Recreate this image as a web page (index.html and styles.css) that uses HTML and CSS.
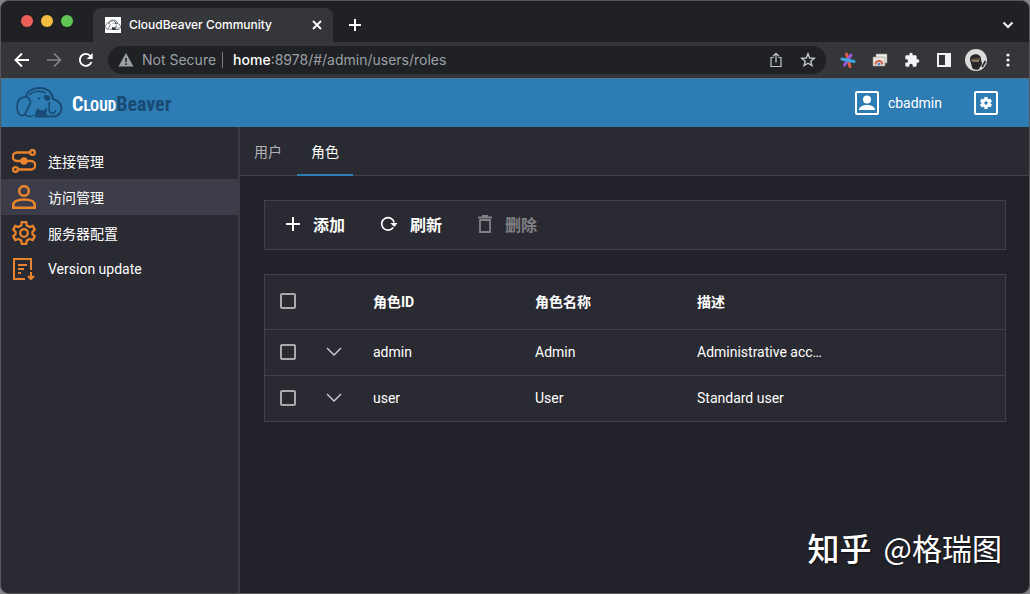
FILE: index.html
```html
<!DOCTYPE html>
<html lang="zh-CN">
<head>
<meta charset="utf-8">
<title>CloudBeaver Community</title>
<link rel="stylesheet" href="styles.css">
</head>
<body>
<svg class="defs" width="0" height="0" aria-hidden="true">
  <symbol id="beaver" viewBox="0 0 48 34">
    <path d="M11 11C12 5 18 2 25 2C32 2 37 6 38 13C43 14 47 18 46.500 23C46 28 42 31 37 30.500H20" fill="none" stroke="currentColor" stroke-width="2"/>
    <path d="M12 11C5 10 2 15 2 21C2 27 5 31 9 29C12 27 11 23 14 20C16 17 16 13 12 11Z" fill="none" stroke="currentColor" stroke-width="1.800"/>
    <path d="M14 9C18 5 25 4 31 7M34 16C35 22 32 25 36 27C38 28 40 27 41 24M10 29C13 31 16 31 19 29" fill="none" stroke="currentColor" stroke-width="1.500"/>
    <path d="M30 9C36 8 37 14 33 15C30 15 27 11 30 9ZM22 11.500L26 12L24 14ZM20 31C20 27 21 24 23 22C26 26 30 25 32 21C33 25 29 27 34 31Z" fill="currentColor"/>
  </symbol>
  <symbol id="chevron" viewBox="0 0 16 10"><path d="M1 1L8 8L15 1" fill="none" stroke="currentColor" stroke-width="1.300"/></symbol>
</svg>
<div class="window">
  <div class="tabstrip">
    <div class="lights"><i class="light red"></i><i class="light yellow"></i><i class="light green"></i></div>
    <div class="browser-tab">
      <svg class="favicon" width="16" height="16"><use href="#beaver"/></svg>
      <span class="tab-title">CloudBeaver Community</span>
      <button class="plain" aria-label="Close tab"><svg width="10" height="10" viewBox="0 0 10 10"><path d="M1 1L9 9M9 1L1 9" stroke="currentColor" stroke-width="1.800"/></svg></button>
    </div>
    <button class="plain new-tab" aria-label="New tab"><svg width="12" height="12" viewBox="0 0 12 12"><path d="M6 0V12M0 6H12" stroke="currentColor" stroke-width="2"/></svg></button>
    <button class="plain tab-search" aria-label="Search tabs"><svg width="12" height="8" viewBox="0 0 12 8"><path d="M1.500 1.500L6 6L10.500 1.500" fill="none" stroke="currentColor" stroke-width="2"/></svg></button>
  </div>
  <div class="browser-bar">
    <button class="plain nav" aria-label="Back"><svg width="16" height="16" viewBox="0 0 16 16"><path d="M15 8H2M8 1.500L1.500 8L8 14.500" fill="none" stroke="currentColor" stroke-width="1.900"/></svg></button>
    <button class="plain nav dim" aria-label="Forward"><svg width="16" height="16" viewBox="0 0 16 16"><path d="M1 8H14M8 1.500L14.500 8L8 14.500" fill="none" stroke="currentColor" stroke-width="1.700"/></svg></button>
    <button class="plain nav" aria-label="Reload"><svg width="16" height="16" viewBox="0 0 16 16"><path d="M13.500 10A6 6 0 1 1 12.500 4" fill="none" stroke="currentColor" stroke-width="1.900"/><path d="M14.700 1V7H8.700Z" fill="currentColor"/></svg></button>
    <div class="address">
      <svg width="16" height="14" viewBox="0 0 16 14"><path fill-rule="evenodd" d="M8 0L15.500 13.500H.5ZM7.200 5V9H8.800V5ZM7.200 10.300V12H8.800V10.300Z" fill="currentColor"/></svg>
      <span class="security">Not Secure</span>
      <span class="url"><b>home</b>:8978/#/admin/users/roles</span>
      <button class="plain" aria-label="Share"><svg width="14" height="16" viewBox="0 0 14 16"><path d="M4.500 5.500H2V14.500H12V5.500H9.500M7 10.500V1.500M4 4.200L7 1.300L10 4.200" fill="none" stroke="currentColor" stroke-width="1.200"/></svg></button>
      <button class="plain" aria-label="Bookmark"><svg width="16" height="16" viewBox="0 0 16 16"><path d="M8 1.800L9.700 6L14.200 6.300L10.800 9.200L11.900 13.600L8 11.200L4.100 13.600L5.200 9.200L1.800 6.300L6.300 6Z" fill="none" stroke="currentColor" stroke-width="1.400"/></svg></button>
    </div>
    <div class="extensions">
      <button class="plain ext" aria-label="Color extension"><svg width="16" height="16" viewBox="0 0 16 16" stroke-width="3" stroke-linecap="round"><path d="M6.500 2L10 14.500" stroke="#d95d45"/><path d="M11 3L4.500 13" stroke="#9b59dc"/><path d="M2 7L14 9.500" stroke="#39a9e4"/></svg></button>
      <button class="plain ext" aria-label="Picture extension"><svg width="16" height="16" viewBox="0 0 16 16"><path d="M4 2H15V11H4Z" fill="#eee" stroke="#9a9388" stroke-width=".6"/><path d="M1 5H13V14H1Z" fill="#e8e4dc" stroke="#9a9388" stroke-width=".6"/><path d="M3.500 12.500A3.500 3.500 0 0 1 10.500 12.500" fill="none" stroke="#d65b49" stroke-width="2"/><circle cx="7" cy="12" r="1.500" fill="#498fcf"/></svg></button>
      <button class="plain ext" aria-label="Extensions"><svg width="16" height="16" viewBox="0 0 24 24"><path d="M20.500 11H19V7c0-1.100-.9-2-2-2h-4V3.500a2.500 2.500 0 0 0-5 0V5H4c-1.100 0-2 .9-2 2v3.800h1.500a2.700 2.700 0 0 1 0 5.400H2V20c0 1.100.9 2 2 2h3.800v-1.500a2.700 2.700 0 0 1 5.400 0V22H17c1.100 0 2-.9 2-2v-4h1.500a2.500 2.500 0 0 0 0-5Z" fill="currentColor"/></svg></button>
      <button class="plain ext" aria-label="Side panel"><svg width="16" height="16" viewBox="0 0 16 16"><path fill-rule="evenodd" d="M1 1H15V15H1ZM3 3V13H9V3Z" fill="currentColor"/></svg></button>
      <button class="plain ext" aria-label="Profile"><svg width="22" height="22" viewBox="0 0 22 22"><circle cx="11" cy="11" r="11" fill="#dddada"/><path d="M5 11C4 4 16 3 16 10L17 15L14 20C11 22 7 20 7 18Z" fill="#292727"/><path d="M6.500 10L14.500 9.500L14 12.500L7 12.500Z" fill="#c6ab8d"/><path d="M7 10.900L14 10.700" stroke="#292727" stroke-width="1"/><path d="M20.500 12L17 18" stroke="#292727" stroke-width="1.800"/></svg></button>
      <button class="plain ext" aria-label="Menu"><svg width="16" height="16" viewBox="0 0 16 16" fill="currentColor"><circle cx="8" cy="3" r="1.600"/><circle cx="8" cy="8" r="1.600"/><circle cx="8" cy="13" r="1.600"/></svg></button>
    </div>
  </div>
  <header class="app-header">
    <a class="brand" href="#" aria-label="CloudBeaver"><svg width="48" height="34"><use href="#beaver"/></svg><span class="wordmark"><span class="cloud">C<small>LOUD</small></span>Beaver</span></a>
    <button class="plain account"><svg width="24" height="24" viewBox="0 0 24 24"><rect x="1" y="1" width="22" height="22" rx="1" fill="none" stroke="currentColor" stroke-width="2"/><circle cx="12" cy="8.500" r="4" fill="currentColor"/><path d="M4 19C4 15.500 8 14 12 14S20 15.500 20 19Z" fill="currentColor"/></svg>cbadmin</button>
    <button class="plain settings" aria-label="Settings"><svg width="24" height="24" viewBox="0 0 24 24"><rect x="1" y="1" width="22" height="22" rx="1" fill="none" stroke="currentColor" stroke-width="2"/><circle cx="12" cy="12" r="3.200" fill="none" stroke="currentColor" stroke-width="3"/><path d="M12 6V8M12 16V18M6.800 9L8.500 10M15.500 14L17.200 15M6.800 15L8.500 14M15.500 10L17.200 9" stroke="currentColor" stroke-width="3.200"/></svg></button>
  </header>
  <div class="workspace">
    <nav class="sidebar">
      <a href="#connections"><svg width="24" height="24" viewBox="0 0 24 24" fill="none" stroke="currentColor" stroke-width="2.400"><circle cx="20.500" cy="3.500" r="2.400"/><circle cx="3.500" cy="20.500" r="2.400"/><path d="M18 3.500H5A4 4 0 0 0 5 12H19A4 4 0 0 1 19 20.500H6"/><circle cx="12" cy="12" r="2.500" fill="currentColor"/></svg>连接管理</a>
      <a href="#access" class="active"><svg width="24" height="24" viewBox="0 0 24 24" fill="none" stroke="currentColor" stroke-width="2.600"><circle cx="12" cy="6" r="4.800"/><path d="M1.300 22.700V20C1.300 16.500 6 14.500 12 14.500S22.700 16.500 22.700 20V22.700Z"/></svg>访问管理</a>
      <a href="#server"><svg width="24" height="24" viewBox="0 0 24 24" fill="none" stroke="currentColor" stroke-width="2.300"><path d="M9.800 1.200H14.200L14.900 4.500L17.500 6L20.800 4.900L22.800 8.600L20.400 11V13L22.800 15.400L20.800 19.100L17.500 18L14.900 19.500L14.200 22.800H9.800L9.100 19.500L6.500 18L3.200 19.100L1.200 15.400L3.600 13V11L1.200 8.600L3.200 4.900L6.500 6L9.100 4.500Z"/><circle cx="12" cy="12" r="3.800"/></svg>服务器配置</a>
      <a href="#version"><svg width="24" height="24" viewBox="0 0 24 24" fill="none" stroke="currentColor" stroke-width="2"><path d="M13 22H2V2H19V13M6 8H15M6 12H12M6 16H9M19 15V22M16 19L19 22L22 19"/></svg>Version update</a>
    </nav>
    <main>
      <div class="tabs" role="tablist"><button class="plain tab" role="tab">用户</button><button class="plain tab selected" role="tab" aria-selected="true">角色</button></div>
      <div class="content">
        <div class="toolbar">
          <button class="plain"><svg width="16" height="16" viewBox="0 0 16 16"><path d="M8 1V15M1 8H15" stroke="currentColor" stroke-width="2"/></svg>添加</button>
          <button class="plain"><svg width="18" height="16" viewBox="0 0 18 16"><path d="M13.200 11.500A6.300 6.300 0 1 1 14.200 6.500" fill="none" stroke="currentColor" stroke-width="1.700"/><path d="M10.300 7H17.500L14.300 11Z" fill="currentColor"/></svg>刷新</button>
          <button class="plain" disabled><svg width="16" height="18" viewBox="0 0 16 18"><path d="M1 2.500H15M5 1H11M3 5H13V17H3Z" fill="none" stroke="currentColor" stroke-width="1.800"/></svg>删除</button>
        </div>
        <table class="roles">
          <colgroup><col class="narrow"><col class="narrow"><col class="field"><col class="field"><col></colgroup>
          <thead><tr><th><input type="checkbox" aria-label="全选"></th><th></th><th>角色ID</th><th>角色名称</th><th>描述</th></tr></thead>
          <tbody>
            <tr><td><input type="checkbox" aria-label="admin"></td><td><button class="plain expand" aria-label="Expand admin"><svg width="16" height="10"><use href="#chevron"/></svg></button></td><td>admin</td><td>Admin</td><td>Administrative acc…</td></tr>
            <tr><td><input type="checkbox" aria-label="user"></td><td><button class="plain expand" aria-label="Expand user"><svg width="16" height="10"><use href="#chevron"/></svg></button></td><td>user</td><td>User</td><td>Standard user</td></tr>
          </tbody>
        </table>
      </div>
    </main>
  </div>
  <div class="watermark"><b>知乎</b><span>@格瑞图</span></div>
</div>
</body>
</html>
```
FILE: styles.css
```css
* { box-sizing: border-box; }
body { margin: 0; background: #858487; font-family: Roboto, "Noto Sans CJK SC", sans-serif; font-size: 14px; color: #fff; }
svg { display: block; flex: none; }
.defs { position: absolute; }
.window { position: relative; display: flex; flex-direction: column; min-height: 100vh; overflow: hidden; border: 1px solid #55575a; border-radius: 9px; background: #22222b; }
.plain { display: flex; align-items: center; justify-content: center; margin: 0; padding: 0; border: 0; background: none; color: inherit; font: inherit; }

.tabstrip { display: flex; height: 41px; padding: 0 15px 0 20px; background: #202124; font-family: Inter, sans-serif; font-size: 12px; }
.lights { display: flex; gap: 8px; width: 72px; padding-top: 14px; }
.light { width: 12px; height: 12px; border-radius: 50%; }
.red { background: #ed6059; }
.yellow { background: #f6be40; }
.green { background: #62c655; }
.browser-tab { display: flex; align-items: center; gap: 8px; width: 240px; margin-top: 7px; padding: 0 11px 1px 12px; border-radius: 8px 8px 0 0; background: #35363a; }
.favicon { background: #fff; color: #26333d; }
.tab-title { flex: 1; font-weight: 500; white-space: nowrap; }
.new-tab { margin: 7px 0 0 16px; }
.tab-search { margin: 7px 0 0 auto; }

.browser-bar { display: flex; align-items: center; gap: 16px; height: 36px; padding: 0 13px; background: #35363a; font-family: Inter, sans-serif; }
.dim { color: #85868a; }
.address { display: flex; flex: 1; align-items: center; height: 28px; margin: 0 -2px; padding: 0 10px; border-radius: 14px; background: #202124; color: #9aa0a6; }
.security { margin: 0 10px 0 8px; padding-right: 6px; border-right: 1px solid #777a7e; line-height: 16px; white-space: nowrap; }
.url { flex: 1; line-height: 16px; white-space: nowrap; }
.url b { color: #fff; font-weight: 500; }
.address .plain { width: 16px; margin-left: 16px; color: #c4c7ca; }
.extensions { display: flex; align-items: center; gap: 16px; color: #f1f3f4; }
.ext { width: 16px; }

.app-header { display: flex; align-items: center; height: 49px; padding: 0 31px 0 14px; border-top: 1px solid #557386; background: #2e7cb4; }
.brand { display: flex; align-items: center; gap: 9px; margin-right: auto; color: #174b73; text-decoration: none; }
.wordmark { padding-top: 4px; font: bold 20px/28px "Roboto Condensed", Roboto, sans-serif; }
.cloud { color: #fff; }
.cloud small { font-size: 15px; }
.account { gap: 9px; }
.settings { margin-left: 32px; }

.workspace { display: flex; flex: 1; }
.sidebar { width: 239px; padding-top: 16px; border-right: 2px solid #3c3c46; background: #2a2a32; }
.sidebar a { display: flex; align-items: center; gap: 12px; height: 36px; padding-left: 11px; color: #fff; text-decoration: none; }
.sidebar svg { color: #e9842c; }
.sidebar .active { background: #3d3d49; }
main { flex: 1; min-width: 0; }
.tabs { display: flex; gap: 1px; height: 49px; border-bottom: 1px solid #41414b; background: #2a2a32; }
.tab { width: 56px; height: 49px; border-bottom: 2px solid transparent; color: #b5b5b8; }
.tab.selected { border-color: #2e7cb4; color: #fff; }
.content { padding: 24px 23px 24px 24px; }
.toolbar { display: flex; gap: 35px; height: 50px; padding: 0 20px 2px; border: 1px solid #41414b; background: #2a2a32; font-size: 16px; font-weight: 700; }
.toolbar .plain { gap: 12px; }
.toolbar .plain:disabled { color: #808085; }

.roles { width: 100%; margin-top: 24px; table-layout: fixed; border: 1px solid #41414b; border-spacing: 0; background: #2a2a32; }
.narrow { width: 46px; }
.field { width: 162px; }
.roles th, .roles td { height: 46px; padding: 0 16px 2px; border-top: 1px solid #41414b; text-align: left; white-space: nowrap; }
.roles th { height: 54px; border-top: 0; font-weight: 700; }
.roles th:nth-child(-n+2), .roles td:nth-child(-n+2) { padding-left: 15px; padding-right: 15px; }
.roles input { display: block; width: 16px; height: 16px; margin: 0; appearance: none; border: 2px solid #aaaaad; border-radius: 2px; }
.expand { color: #d5d5d8; }

.watermark { position: absolute; right: 27px; bottom: 22px; display: flex; align-items: center; gap: 12px; font: 30px/48px "Noto Sans CJK SC", sans-serif; text-shadow: 1px 1px 2px #111; }
.watermark b { font-size: 32px; font-weight: 500; }
```
